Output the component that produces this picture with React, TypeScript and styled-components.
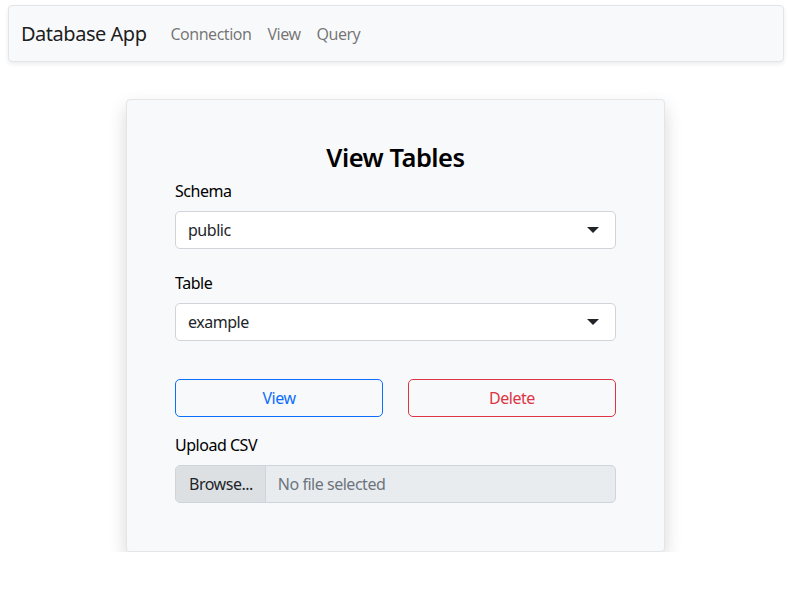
import React from 'react';
import styled, { createGlobalStyle } from 'styled-components';

const GlobalStyle = createGlobalStyle`
	html, body {
		margin: 0;
		padding: 0;
		background: #ffffff;
		font-family: 'Segoe UI', 'Noto Sans', 'Open Sans', sans-serif;
		letter-spacing: -0.03em;
		color: #212529;
		font-size: 16px;
	}
`;

const Navbar = styled.nav`
	display: flex;
	align-items: center;
	height: 55px;
	margin: 5px 4px 0 8px;
	padding: 0 12px;
	background-color: #f8f9fa;
	border: 1px solid #e3e5e8;
	border-radius: 4px;
	box-shadow: 0 2px 4px rgba(0, 0, 0, 0.08);
`;

const Brand = styled.span`
	font-size: 20px;
	color: rgba(0, 0, 0, 0.9);
	margin-right: 16px;
`;

const NavLink = styled.a`
	padding: 0 8px;
	font-size: 16px;
	color: rgba(0, 0, 0, 0.55);
	text-decoration: none;
`;

const Main = styled.main`
	padding-left: 3px;
`;

const Card = styled.div`
	width: 441px;
	margin: 37px auto 0;
	padding: 42px 48px 48px;
	background-color: #f8f9fa;
	border: 1px solid #e3e5e8;
	border-radius: 4px;
	box-shadow: 0 8px 18px rgba(0, 0, 0, 0.16);
`;

const Title = styled.h3`
	margin: 0 0 6px;
	text-align: center;
	font-size: 25.5px;
	line-height: 1.2;
	font-weight: 600;
	color: #000;
`;

const Field = styled.div<{ $gap: number }>`
	margin-bottom: ${(p) => p.$gap}px;
`;

const Label = styled.label`
	display: block;
	margin-bottom: 8px;
	line-height: 24px;
	color: #000;
`;

const SelectBox = styled.div`
	display: flex;
	align-items: center;
	justify-content: space-between;
	height: 36px;
	padding: 0 16px 0 12px;
	background-color: #fff;
	border: 1px solid #ced4da;
	border-radius: 5px;
	color: #212529;
`;

const Caret = styled.span`
	width: 0;
	height: 0;
	border-left: 6px solid transparent;
	border-right: 6px solid transparent;
	border-top: 6px solid #212529;
`;

const ButtonRow = styled.div`
	display: grid;
	grid-template-columns: 1fr 1fr;
	column-gap: 25px;
	margin-bottom: 16px;
`;

const OutlineButton = styled.button<{ $color: string }>`
	height: 38px;
	font-family: inherit;
	font-size: 16px;
	letter-spacing: inherit;
	background: transparent;
	color: ${(p) => p.$color};
	border: 1px solid ${(p) => p.$color};
	border-radius: 5px;
`;

const FileInput = styled.div`
	display: flex;
	height: 36px;
	background-color: #e9ecef;
	border: 1px solid #ced4da;
	border-radius: 5px;
	overflow: hidden;
`;

const FileButton = styled.span`
	display: flex;
	align-items: center;
	padding: 0 12px 0 13px;
	background-color: #dde0e3;
	border-right: 1px solid #ced4da;
	color: #212529;
`;

const FileName = styled.span`
	display: flex;
	align-items: center;
	padding: 0 12px;
	color: #6c757d;
`;

const Select = ({ value }: { value: string }) => (
	<SelectBox>
		<span>{value}</span>
		<Caret />
	</SelectBox>
);

const App = () => (
	<>
		<GlobalStyle />
		<Navbar>
			<Brand>Database App</Brand>
			<NavLink>Connection</NavLink>
			<NavLink>View</NavLink>
			<NavLink>Query</NavLink>
		</Navbar>
		<Main>
			<Card>
				<Title>View Tables</Title>
				<Field $gap={22}>
					<Label>Schema</Label>
					<Select value="public" />
				</Field>
				<Field $gap={38}>
					<Label>Table</Label>
					<Select value="example" />
				</Field>
				<ButtonRow>
					<OutlineButton $color="#0d6efd">View</OutlineButton>
					<OutlineButton $color="#dc3545">Delete</OutlineButton>
				</ButtonRow>
				<Label>Upload CSV</Label>
				<FileInput>
					<FileButton>Browse...</FileButton>
					<FileName>No file selected</FileName>
				</FileInput>
			</Card>
		</Main>
	</>
);

export default App;
